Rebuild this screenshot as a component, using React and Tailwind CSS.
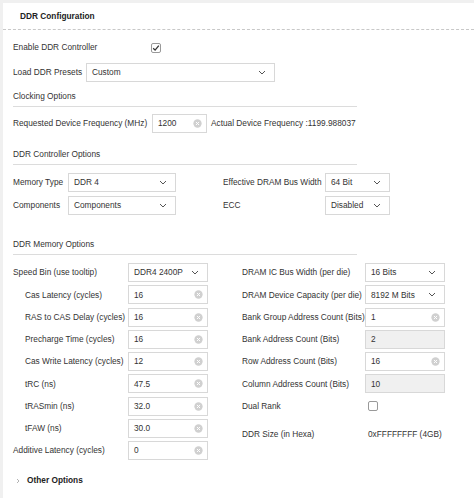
import React from "react"

const Chevron = () => (
  <svg width="8" height="5" viewBox="0 0 8 5" className="shrink-0">
    <path d="M1 1l3 3 3-3" fill="none" stroke="#555" strokeWidth="1" />
  </svg>
)

const ClearIcon = () => (
  <svg width="9" height="9" viewBox="0 0 10 10" className="shrink-0">
    <circle cx="5" cy="5" r="4.6" fill="#d0d0d0" />
    <path d="M3.3 3.3l3.4 3.4M6.7 3.3l-3.4 3.4" stroke="#fff" strokeWidth="1.1" />
  </svg>
)

const Select = ({ value, className = "" }) => (
  <div
    className={`h-[19px] flex items-center justify-between border border-[#d8d8d8] bg-white pl-[5px] pr-[8px] ${className}`}
  >
    <span>{value}</span>
    <Chevron />
  </div>
)

const Input = ({ value, className = "", disabled }) => (
  <div
    className={`h-[19px] flex items-center justify-between border border-[#d8d8d8] pl-[5px] pr-[4px] ${
      disabled ? "bg-[#f0f0f0]" : "bg-white"
    } ${className}`}
  >
    <span>{value}</span>
    {!disabled && <ClearIcon />}
  </div>
)

const Checkbox = ({ checked }) => (
  <div className="w-[10px] h-[10px] border border-[#999] rounded-[2px] bg-white flex items-center justify-center">
    {checked && (
      <svg width="8" height="8" viewBox="0 0 8 8">
        <path d="M1.2 4.2l1.9 1.9 3.7-4.4" fill="none" stroke="#333" strokeWidth="1.3" />
      </svg>
    )}
  </div>
)

const SectionTitle = ({ children, className = "" }) => (
  <div className={className}>
    <div className="h-[19px] flex items-center">{children}</div>
    <div className="h-px w-[344px] bg-[#dcdcdc]" />
  </div>
)

const leftRows = [
  { label: "Speed Bin (use tooltip)", value: "DDR4 2400P", select: true },
  { label: "Cas Latency (cycles)", value: "16", indent: true },
  { label: "RAS to CAS Delay (cycles)", value: "16", indent: true },
  { label: "Precharge Time (cycles)", value: "16", indent: true },
  { label: "Cas Write Latency (cycles)", value: "12", indent: true },
  { label: "tRC (ns)", value: "47.5", indent: true },
  { label: "tRASmin (ns)", value: "32.0", indent: true },
  { label: "tFAW (ns)", value: "30.0", indent: true },
  { label: "Additive Latency (cycles)", value: "0" },
]

const rightRows = [
  { label: "DRAM IC Bus Width (per die)", value: "16 Bits", kind: "select" },
  { label: "DRAM Device Capacity (per die)", value: "8192 M Bits", kind: "select" },
  { label: "Bank Group Address Count (Bits)", value: "1", kind: "input" },
  { label: "Bank Address Count (Bits)", value: "2", kind: "disabled" },
  { label: "Row Address Count (Bits)", value: "16", kind: "input" },
  { label: "Column Address Count (Bits)", value: "10", kind: "disabled" },
  { label: "Dual Rank", kind: "checkbox" },
]

export default function App() {
  return (
    <div className="w-[474px] h-[498px] bg-[#f0f0f0] pl-[3px] pt-[3px] font-['Liberation_Sans',Arial,sans-serif] text-[8.3px] text-[#333] overflow-hidden">
      <div className="bg-white h-full">
        {/* header */}
        <div className="h-[27px] flex items-center pl-[17px] font-bold text-[#222] border-b border-dashed border-[#c8c8c8]">
          DDR Configuration
        </div>

        <div className="pl-[10px]">
          <div className="mt-[8px] h-[19px] flex items-center">
            <span className="w-[138px]">Enable DDR Controller</span>
            <Checkbox checked />
          </div>

          <div className="mt-[6px] h-[19px] flex items-center">
            <span className="w-[73px]">Load DDR Presets</span>
            <Select value="Custom" className="w-[189px]" />
          </div>

          <SectionTitle className="mt-[5px]">Clocking Options</SectionTitle>

          <div className="mt-[7px] h-[19px] flex items-center">
            <span className="w-[139px]">Requested Device Frequency (MHz)</span>
            <Input value="1200" className="w-[55px]" />
            <span className="ml-[4px]">Actual Device Frequency :1199.988037</span>
          </div>

          <SectionTitle className="mt-[12px]">DDR Controller Options</SectionTitle>

          <div className="mt-[8px] h-[19px] flex items-center">
            <span className="w-[55px]">Memory Type</span>
            <Select value="DDR 4" className="w-[108px]" />
            <span className="ml-[47px] w-[102px]">Effective DRAM Bus Width</span>
            <Select value="64 Bit" className="w-[65px]" />
          </div>
          <div className="mt-[4px] h-[19px] flex items-center">
            <span className="w-[55px]">Components</span>
            <Select value="Components" className="w-[108px]" />
            <span className="ml-[47px] w-[102px]">ECC</span>
            <Select value="Disabled" className="w-[65px]" />
          </div>

          <SectionTitle className="mt-[20px]">DDR Memory Options</SectionTitle>

          <div className="mt-[8px] flex">
            <div className="w-[195px] flex flex-col gap-[3.25px]">
              {leftRows.map(r => (
                <div key={r.label} className="h-[19px] flex items-center">
                  <span className={`w-[115px] ${r.indent ? "pl-[12px]" : ""}`}>{r.label}</span>
                  {r.select ? (
                    <Select value={r.value} className="w-[80px]" />
                  ) : (
                    <Input value={r.value} className="w-[80px]" />
                  )}
                </div>
              ))}
            </div>
            <div className="ml-[34px] w-[203px] flex flex-col gap-[3.25px]">
              {rightRows.map(r => (
                <div key={r.label} className="h-[19px] flex items-center">
                  <span className="w-[123px] shrink-0">{r.label}</span>
                  {r.kind === "select" && <Select value={r.value} className="w-[80px]" />}
                  {r.kind === "input" && <Input value={r.value} className="w-[80px]" />}
                  {r.kind === "disabled" && <Input value={r.value} className="w-[80px]" disabled />}
                  {r.kind === "checkbox" && (
                    <div className="pl-[3px]">
                      <Checkbox />
                    </div>
                  )}
                </div>
              ))}
              <div className="h-[19px] flex items-center mt-[6px]">
                <span className="w-[126px]">DDR Size (in Hexa)</span>
                <span>0xFFFFFFFF (4GB)</span>
              </div>
            </div>
          </div>

          <div className="mt-[11px] h-[19px] flex items-center">
            <svg width="4" height="6" viewBox="0 0 4 6" className="ml-[3px] mr-[7px]">
              <path d="M1 1l2 2-2 2" fill="none" stroke="#aaa" strokeWidth="0.9" />
            </svg>
            <span className="font-bold text-[#222]">Other Options</span>
          </div>
        </div>
      </div>
    </div>
  )
}
